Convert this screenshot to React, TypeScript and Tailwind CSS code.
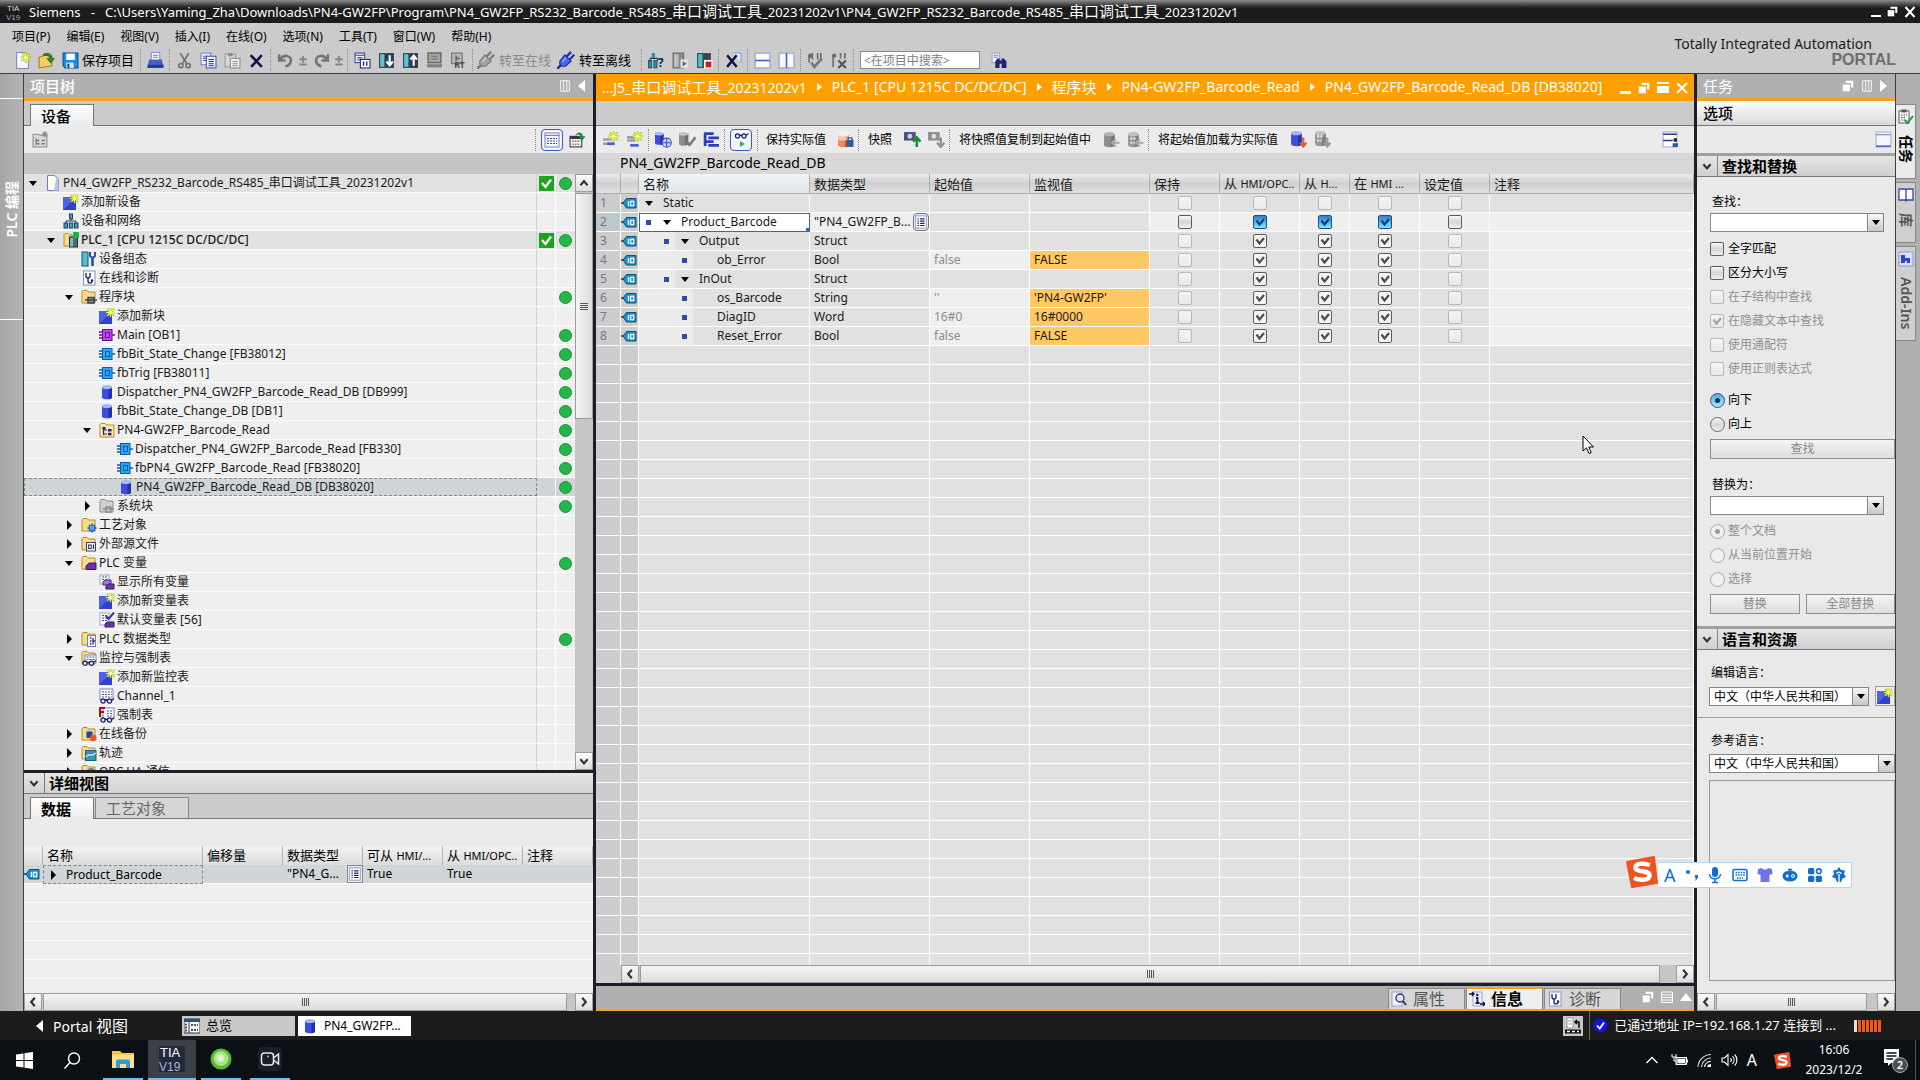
import type { ReactNode } from 'react';
import clsx from 'clsx';

/* ---------- icons ---------- */

const Star = ({ x = 12, y = 4 }: { x?: number; y?: number }) => (
  <g transform={`translate(${x} ${y})`}>
    <path d="M0-4.800V4.800M-4.800 0H4.800M-3.500-3.500L3.500 3.500M3.500-3.500L-3.500 3.500" stroke="#8cab1c" strokeWidth="1.700" />
    <path d="M0-4.200V4.200M-4.200 0H4.200M-3-3L3 3M3-3L-3 3" stroke="#f2ff4a" strokeWidth="1.100" />
    <circle r="1.500" fill="#fdffc0" />
  </g>
);

const Folder = ({ fill = '#f8dc8c', line = '#b58a2c' }: { fill?: string; line?: string }) => (
  <path d="M1 14V2.5L2 1.5H6L7.5 3H14V14Z" fill={fill} stroke={line} strokeWidth="1" />
);

const Doc = () => <path d="M2.5.5H10L13.5 4V15.5H2.5Z" fill="#f6f8ff" stroke="#7c86b8" />;

const Glasses = ({ y = 13 }: { y?: number }) => (
  <g fill="#dfe8ff" stroke="#16205e" strokeWidth="1.2">
    <circle cx="4" cy={y} r="2.1" />
    <circle cx="10.5" cy={y} r="2.1" />
    <path d="M6 12.4H8.5M12.6 12.4L15 10.5" fill="none" />
  </g>
);

const Lines = ({ color = '#4b5696' }: { color?: string }) => (
  <path d="M3 4H13M3 6.5H13M3 9H13M3 11.5H13" stroke={color} strokeDasharray="2 1" />
);

const Plug = ({ a, b }: { a: string; b: string }) => (
  <g stroke={b} strokeWidth="1">
    <path d="M0 16L4 12" strokeWidth="2.2" />
    <path d="M2.5 9L7 3.500L12.500 9L7.500 13.500H4.500L2.500 11.500Z" fill={a} />
    <path d="M8.500 5L12.500 .800M11.200 7.500L15.300 3.300" strokeWidth="2" />
    <path d="M5 9.500L8 6" stroke="#fff" strokeOpacity=".6" />
  </g>
);

const Block = ({ a, b }: { a: string; b: string }) => (
  <g>
    <path d="M0 5H4M0 8H4M0 11H4M12 8H16" stroke={b} strokeWidth="1.7" />
    <rect x="3.5" y="2.500" width="9.5" height="11" fill={a} stroke={b} />
    <rect x="6.5" y="5.5" width="4" height="5" fill="none" stroke={b} />
  </g>
);

const Cylinder = ({ a, b, c }: { a: string; b: string; c: string }) => (
  <g>
    <path d="M3 3V13.2C3 16 13 16 13 13.2V3Z" fill={a} />
    <path d="M9.5 3V15.2C12 14.9 13 14.2 13 13.2V3Z" fill={b} />
    <ellipse cx="8" cy="3" rx="5" ry="2" fill={c} />
  </g>
);

const icons: Record<string, ReactNode> = {
  newDoc: <><Doc /><Star x={11} y={5} /></>,
  open: <><path d="M1 15V5L7 3H13V13Z" fill="#f4cf62" stroke="#a77b1e" /><path d="M5 2C10 0 13 2 13 6H15.5L12 10.5L8.5 6H11C11 4 9 2.5 5 3.5Z" fill="#2c8c35" stroke="#175a1d" strokeWidth=".6" /></>,
  save: <><path d="M1 1H15V15H3L1 13Z" fill="#1b8be0" stroke="#0c4f98" /><rect x="4" y="1.5" width="8" height="6" fill="#fff" /><rect x="4" y="10" width="7" height="5" fill="#dbe9fa" /><rect x="5" y="11" width="2" height="4" fill="#0c4f98" /></>,
  print: <><rect x="4" y="0.5" width="8" height="8" fill="#fff" stroke="#8794c6" /><path d="M5.5 3H10.5M5.5 5H10.5" stroke="#6d7cbb" /><path d="M2 7H14L15.5 14H.5Z" fill="#4560cc" /><rect x=".5" y="12" width="15" height="3" fill="#2338a0" /></>,
  cut: <g fill="none" stroke="#6f6f6f" strokeWidth="1.6"><path d="M4 1L10 11M12 1L6 11" /><circle cx="4.5" cy="12.8" r="2" /><circle cx="11.5" cy="12.8" r="2" /></g>,
  copy: <><rect x="1" y="1" width="9" height="11" fill="#eef1ff" stroke="#7983bf" /><path d="M3 4H8M3 6H8M3 8H8" stroke="#4858ad" /><rect x="6" y="4" width="9" height="11" fill="#f7f8ff" stroke="#4858ad" /><path d="M8 7H13M8 9H13M8 11H13M8 13H13" stroke="#222e86" /></>,
  paste: <><rect x="1" y="2" width="10" height="12" fill="#d5d5d5" stroke="#9a9a9a" /><rect x="4" y="1" width="4" height="3" fill="#8b8b8b" /><rect x="6" y="6" width="9" height="9" fill="#f1f1f1" stroke="#8d8d8d" /><path d="M8 9H13M8 11H13M8 13H13" stroke="#8d8d8d" /></>,
  cross: <path d="M2.5 3L13 14M13 3L3 14" stroke="#11134f" strokeWidth="2.4" />,
  undo: <path d="M2 2V8H8M3 7C7 1 14 4 13 9C12.500 12 10 13 8 13.500" fill="none" stroke="#757575" strokeWidth="2.4" />,
  redo: <path d="M14 2V8H8M13 7C9 1 2 4 3 9C3.500 12 6 13 8 13.500" fill="none" stroke="#757575" strokeWidth="2.4" />,
  plusMinus: <path d="M3 7H13M8 2.500V11.500M3 14H13" stroke="#858585" strokeWidth="2.400" />,
  compile: <><rect x="1" y="1" width="9" height="9" fill="#f0f3ff" stroke="#3e4a90" /><path d="M1 3H10M3 5.500H8M3 7.500H8" stroke="#3e4a90" /><rect x="6" y="7" width="9" height="8" fill="#fff" stroke="#222b6a" /><path d="M9 9V13M12 9V13" stroke="#222b6a" strokeWidth="1.300" /></>,
  download: <><rect x="1" y="1" width="14" height="14" fill="#2d3f58" /><rect x="2" y="2" width="4" height="12" fill="#63c4cb" /><path d="M11 3V11M8 9L11 12.500L14 9" fill="none" stroke="#fff" strokeWidth="2" /></>,
  upload: <><rect x="1" y="1" width="14" height="14" fill="#2d3f58" /><rect x="2" y="2" width="4" height="12" fill="#63c4cb" /><path d="M11 13V5M8 7L11 3.500L14 7" fill="none" stroke="#fff" strokeWidth="2" /></>,
  pcSim: <><rect x="2" y="1" width="12" height="9" fill="#a6a6a6" stroke="#6e6e6e" strokeWidth="1.500" /><path d="M5 4H11M5 6.500H11" stroke="#6e6e6e" /><rect x="1" y="11.500" width="14" height="3" fill="#7f7f7f" /></>,
  rt: <><rect x="1.500" y="1" width="10" height="10" fill="#b5b5b5" stroke="#6e6e6e" /><path d="M5 3L9.500 6L5 9Z" fill="#6e6e6e" /><text x="4" y="15.500" fontSize="8" fontWeight="700" fill="#4a4a4a">RT</text></>,
  plugOff: <Plug a="#a5a5a5" b="#7a7a7a" />,
  plugOn: <Plug a="#4b68e8" b="#1d2f9c" />,
  netHelp: <><path d="M5 2V6M2 8V6H9V8" stroke="#1c3c60" fill="none" /><rect x="3.500" y="1" width="3" height="4" fill="#2a8fa5" /><rect x=".500" y="8" width="3" height="7" fill="#2a8fa5" stroke="#1c3c60" strokeWidth=".700" /><rect x="5.500" y="8" width="3" height="7" fill="#2a8fa5" stroke="#1c3c60" strokeWidth=".700" /><text x="9.500" y="14" fontSize="11" fontWeight="700" fill="#14163f">?</text></>,
  cpuRun: <><rect x="1" y="1" width="10" height="14" fill="#8c8c8c" stroke="#6a6a6a" /><rect x="2" y="2" width="4" height="12" fill="#c0c0c0" /><rect x="8" y="7" width="7" height="8" fill="#e2e2e2" /><path d="M10 8.500L14 11L10 13.500Z" fill="#6a6a6a" /></>,
  cpuStop: <><rect x="1" y="1" width="13" height="14" fill="#3b4658" /><rect x="2" y="2" width="4" height="12" fill="#55bcc6" /><rect x="7.500" y="7.500" width="8" height="8" fill="#fff" /><rect x="9" y="9" width="5.500" height="5.500" fill="#e31818" /></>,
  crossRef: <><path d="M8 1H15V10" fill="#e7ebff" stroke="#8c98ce" /><path d="M2 3L11 14M11 3L2 14" stroke="#11134f" strokeWidth="2.300" /></>,
  splitH: <><rect x="1" y="1" width="14" height="14" fill="#fafbff" stroke="#a4addb" strokeWidth="1.400" /><path d="M1 8H15" stroke="#4a65c8" strokeWidth="1.600" /></>,
  splitV: <><rect x="1" y="1" width="14" height="14" fill="#fafbff" stroke="#a4addb" strokeWidth="1.400" /><path d="M8 1V15" stroke="#4a65c8" strokeWidth="1.600" /></>,
  sessOk: <><path d="M2 4V10M5 1V7M10 1V7M13 1V7" stroke="#696969" strokeWidth="1.500" /><circle cx="3" cy="3.500" r="2" fill="#696969" /><path d="M4 10L7 14L14 6" fill="none" stroke="#777" strokeWidth="2.500" /></>,
  sessNo: <><path d="M2 4V14M9 1V6M13 1V6" stroke="#696969" strokeWidth="1.500" /><circle cx="3" cy="3.500" r="2" fill="#696969" /><path d="M7 8L14 15M14 8L7 15" stroke="#555" strokeWidth="2" /></>,
  find: <><path d="M2 1H9V10H2Z" fill="#f2f4ff" stroke="#9aa3cf" /><path d="M3.500 3H7.500M3.500 5H7.500" stroke="#7781b8" /><path d="M5 15V9L7 6H9V15ZM11 15V6H13L15.500 9V15Z" fill="#1c2570" /><rect x="8" y="8" width="4" height="3" fill="#1c2570" /></>,
  treeNew: <><path d="M1 15V3H6L7 4H14V15Z" fill="#dadada" stroke="#8b8b8b" /><path d="M4 7V13M4 9H7M4 12H7M9 9H12M9 12H12" stroke="#7c7c7c" strokeWidth="1.400" /><path d="M12 0V6M9 3H15M10 1L14 5M14 1L10 5" stroke="#8b8b8b" /></>,
  listView: <><rect x="1" y="1" width="14" height="14" fill="#f5f7ff" stroke="#7480bb" /><path d="M1 3.500H15" stroke="#7480bb" /><path d="M3 6.500H13M3 9H13M3 11.500H13" stroke="#4350a0" strokeDasharray="2 1" /></>,
  gridArrow: <><rect x="1" y="5" width="11" height="10" fill="#fff" stroke="#30314a" /><rect x="1" y="5" width="11" height="2.500" fill="#30314a" /><path d="M3 9.500H11M3 12.500H11" stroke="#b0703c" strokeWidth="1.600" strokeDasharray="1.600 1" /><path d="M6 4C8 0 13 1 13 5H15.500L12 9.500L8.500 5H11C10.500 3 8 3 6 4Z" fill="#23853a" /></>,
  project: <><path d="M2.500.500H9.500L13.500 4V15.500H2.500Z" fill="#fff" stroke="#6f7db6" /><path d="M11 4H13.500V15.500H9Z" fill="#b9c4ee" /></>,
  addNew: <><rect x="0" y="3" width="13" height="13" fill="#3340cf" /><path d="M0 3H13L0 16Z" fill="#4d63e6" /><Star x={11.5} y={4.5} /></>,
  network: <><path d="M8 5V8M3 11V8H13V11" stroke="#1c3c60" fill="none" /><g fill="#39a3b0" stroke="#17415e"><rect x="6.500" y="1" width="3" height="5" /><rect x="1" y="10" width="3.500" height="5" /><rect x="6.300" y="10" width="3.500" height="5" /><rect x="11.500" y="10" width="3.500" height="5" /></g></>,
  plc: <><path d="M1 14V2.500L2 1.500H5L6.500 3H9V14Z" fill="#f8dc8c" stroke="#b58a2c" /><rect x="6.500" y="5" width="8" height="10" fill="#58666f" stroke="#1f2f38" /><rect x="7" y="6" width="3" height="8.500" fill="#5cc5c9" /><rect x="10" y="0" width="6" height="6" fill="#1fb141" /></>,
  config: <><rect x="1" y="1" width="6" height="14" fill="#4fbfc9" stroke="#1f4f70" /><path d="M11.500 6V15" stroke="#27509e" strokeWidth="2.600" /><path d="M9 1V5L11.500 7L14 5V1" fill="none" stroke="#27509e" strokeWidth="2" /></>,
  diag: <><rect x="2.500" y="1" width="11.500" height="14" fill="#fff" stroke="#8591c5" /><path d="M5 3V6C5 8.500 9 8.500 9 6V3M7 8V11C7 13.500 11 13.500 11 11" fill="none" stroke="#1d2870" strokeWidth="1.400" /><circle cx="11" cy="10.500" r="1.300" fill="#1d2870" /></>,
  blocks: <><Folder /><path d="M4 11H16M7 8.500H13V14H7Z" stroke="#3d464c" fill="#8b969c" strokeWidth="1.500" /></>,
  ob: <Block a="#b54be0" b="#6a1296" />,
  fb: <Block a="#2fa4f2" b="#0b5dab" />,
  db: <Cylinder a="#3d4ddb" b="#2430a5" c="#aab4f6" />,
  group: <><path d="M1 15V2.500L2 1.500H6L7.500 3H15V15Z" fill="#fbe7ae" stroke="#b58a2c" /><path d="M4.500 6V13M4.500 8H8M4.500 12H8" stroke="#2a1d80" strokeWidth="1.200" fill="none" /><rect x="3.500" y="5" width="3" height="2.500" fill="#2a1d80" /><rect x="9" y="7" width="3.500" height="2.500" fill="#2a1d80" /><rect x="9" y="10.800" width="3.500" height="2.500" fill="#2a1d80" /></>,
  sysBlocks: <><Folder fill="#cfcfcf" line="#8b8b8b" /><path d="M4 11H15M7 9H12V14H7Z" stroke="#8b8b8b" fill="#d8d8d8" strokeWidth="1.400" /></>,
  tech: <><Folder /><path d="M11 6.500V15.500M6.500 11H15.500M8 8L14 14M14 8L8 14" stroke="#1b62b8" strokeWidth="1.800" /><circle cx="11" cy="11" r="2.400" fill="#5a9ae8" /></>,
  source: <><Folder /><rect x="5.500" y="6.500" width="9" height="8.500" fill="#fff" stroke="#3a4350" /><path d="M12.500 8.500V13" stroke="#1c2470" strokeWidth="1.300" /><rect x="7.600" y="9" width="2.600" height="3.600" fill="none" stroke="#1c2470" /></>,
  tags: <><Folder /><path d="M5 11L8 8H15V14.500H5Z" fill="#6a35ab" stroke="#3c1673" /></>,
  allTags: <><rect x="1" y="1" width="9" height="9" fill="#fff" stroke="#9aa2c8" /><path d="M3 3H8M3 5.500H8" stroke="#38449a" strokeDasharray="2 1" /><path d="M4 8L6 6H12V11H4Z" fill="#9b7ad0" stroke="#4a2786" /><path d="M7 12L9 10H15V15H7Z" fill="#6a35ab" stroke="#3c1673" /></>,
  defTags: <><rect x="1" y="1" width="9" height="12" fill="#fff" stroke="#9aa2c8" /><path d="M3 3.500H8M3 6H8M3 8.500H8" stroke="#38449a" strokeDasharray="2 1" /><path d="M7 4L9.500 7L15 .500" fill="none" stroke="#2736b0" strokeWidth="2" /><path d="M6 12L8 10H15V15H6Z" fill="#6a35ab" stroke="#3c1673" /></>,
  types: <><Folder /><rect x="6.500" y="4.500" width="8" height="11" fill="#fff" stroke="#6d7cbb" /><path d="M9 7H10.500M9 10H10.500M9 13H10.500M12 7V13.500M12 10H14" stroke="#1d2870" strokeWidth="1.300" /></>,
  watch: <><Folder /><rect x="4" y="5" width="11" height="8" fill="#fff" stroke="#7a86bf" /><path d="M5.500 7H13.500M5.500 9.500H13.500" stroke="#4b5696" strokeDasharray="2 1" /><Glasses y={13.2} /></>,
  channel: <><rect x="1" y="1" width="13" height="11" fill="#fff" stroke="#7a86bf" /><Lines /><Glasses /></>,
  force: <><rect x="4" y="1" width="11" height="11" fill="#fff" stroke="#7a86bf" /><path d="M8 4H14M8 6.500H14M8 9H14" stroke="#4b5696" strokeDasharray="2 1" /><path d="M1 10V1H6M1 5H5" fill="none" stroke="#a4102a" strokeWidth="2.200" /><Glasses /></>,
  backup: <><Folder /><ellipse cx="8.500" cy="6" rx="3" ry="1.500" fill="#7d90e0" /><rect x="5.500" y="6" width="6" height="6" fill="#2c3bb0" /><circle cx="12.300" cy="12" r="3.300" fill="#e8562a" /></>,
  trace: <><Folder /><rect x="4.500" y="5.500" width="10.500" height="10" fill="#3d8db5" stroke="#1d5f85" /><path d="M5 12C8 7 10 13 14.500 8" fill="none" stroke="#d7f4ff" strokeWidth="1.300" /></>,
  opc: <><Folder /><circle cx="10" cy="9" r="5" fill="#6c77c4" /></>,
  tag: <><path d="M0 8H3" stroke="#12405f" strokeWidth="1.500" /><path d="M2 8L5.500 3.500H15V13H5.500Z" fill="#1e8fd0" stroke="#0a4f80" /><path d="M7.500 6V11" stroke="#fff" strokeWidth="1.400" /><rect x="9.700" y="6.300" width="3" height="4.400" fill="none" stroke="#fff" strokeWidth="1.200" /></>,
  listBtn: <><rect x="2" y="1" width="12" height="14" fill="#fff" stroke="#8791c2" /><path d="M4 4.500H5.500M4 7H5.500M4 9.500H5.500M4 12H5.500M7 4.500H12M7 7H12M7 9.500H12M7 12H12" stroke="#1d2060" strokeWidth="1.300" /></>,
  rowIns: <><path d="M1 8H9M1 12H7" stroke="#9aa0b4" strokeWidth="2.400" /><path d="M5 12H12" stroke="#4c60cc" strokeWidth="2.600" /><Star x={11} y={5} /></>,
  rowAdd: <><path d="M1 6H8M1 9H9" stroke="#9aa0b4" strokeWidth="2.400" /><path d="M4 13.500H12" stroke="#4c60cc" strokeWidth="2.600" /><Star x={11} y={5} /></>,
  dbNet: <><g transform="translate(-3 0) scale(.85)"><Cylinder a="#3d4ddb" b="#2430a5" c="#aab4f6" /></g><circle cx="11" cy="11" r="4.300" fill="#c8d4ff" stroke="#3a50b5" /><path d="M7 11H15M11 7V15" stroke="#3a50b5" /></>,
  dbCheck: <><g transform="translate(-3 0) scale(.9)"><Cylinder a="#8d8d8d" b="#6f6f6f" c="#c5c5c5" /></g><path d="M7 10L10 13L15.500 6" fill="none" stroke="#7b7b7b" strokeWidth="2.500" /></>,
  expandAll: <path d="M1 2.500H10M5 6.500H15M1 10H10M5 13.500H15M2 2V14" stroke="#2c3fb4" strokeWidth="2.600" />,
  monitor: <><g transform="translate(.5 -9)"><Glasses /></g><path d="M7 9L12 12L7 15Z" fill="#2fb35a" /></>,
  dbLock: <><g transform="translate(-2 0)"><Cylinder a="#f08a4c" b="#c7551c" c="#f7f7f7" /><path d="M3 3V8C5 9.500 11 9.500 13 8V3Z" fill="#f1e4dc" opacity=".7" /></g><rect x="9" y="8.500" width="6.500" height="6.500" fill="#2f5c9c" /><path d="M10.500 8.500V6.500H14V8.500" fill="none" stroke="#2f5c9c" strokeWidth="1.300" /></>,
  snapUp: <><rect x="0" y="1" width="11" height="8" fill="#4a5478" /><circle cx="5.500" cy="5" r="2.300" fill="#c9d2f5" /><path d="M12 15V8M8.500 10L12 6L15.500 10" stroke="#1d8b36" strokeWidth="2.400" fill="none" /></>,
  snapDown: <><rect x="0" y="1" width="11" height="8" fill="#8f8f8f" /><circle cx="5.500" cy="5" r="2.300" fill="#ddd" /><path d="M12 6V13M8.500 11L12 15L15.500 11" stroke="#8f8f8f" strokeWidth="2.200" fill="none" /></>,
  dbLeft: <><g transform="translate(-2 0)"><Cylinder a="#8d8d8d" b="#747474" c="#b5b5b5" /></g><path d="M15.500 11H9M12 7.500L8.500 11L12 14.500" stroke="#a8a8a8" strokeWidth="2" fill="none" /></>,
  dbLeft2: <><g transform="translate(-2 0)"><Cylinder a="#969696" b="#7d7d7d" c="#c0c0c0" /></g><path d="M3 7H8M3 11H7" stroke="#eee" strokeWidth="2" strokeDasharray="2 1" /><path d="M15.500 11H9M12 7.500L8.500 11L12 14.500" stroke="#a8a8a8" strokeWidth="2" fill="none" /></>,
  dbDown: <><g transform="translate(-2 -1)"><Cylinder a="#3d4ddb" b="#2430a5" c="#aab4f6" /></g><path d="M12.500 6V13M9.500 11L12.500 14.500L15.500 11" stroke="#e8562a" strokeWidth="2" fill="none" /></>,
  dbDown2: <><g transform="translate(-2 -1)"><Cylinder a="#969696" b="#7d7d7d" c="#c0c0c0" /></g><path d="M3 5H8M3 9H7" stroke="#eee" strokeWidth="2" strokeDasharray="2 1" /><path d="M12.500 6V13M9.500 11L12.500 14.500L15.500 11" stroke="#999" strokeWidth="2" fill="none" /></>,
  layout: <><rect x="1" y="1" width="13" height="14" fill="#fff" stroke="#a4addb" /><path d="M1 3H14M1 9H10" stroke="#2c3f84" strokeWidth="1.300" /><circle cx="12.500" cy="8.500" r="1.800" fill="#223" /><path d="M10 15V11.500H15V15Z" fill="#2b5aa8" /></>,
  window: <><rect x="1" y="1" width="14" height="13" fill="#f4f6ff" stroke="#a4addb" /><path d="M1 3.500H15" stroke="#7480bb" /><path d="M1 14.500H15" stroke="#4a65c8" strokeWidth="1.500" /></>,
  taskTab: <><rect x="1" y="2" width="10" height="12" fill="#fff" stroke="#4e5a66" /><rect x="3.500" y=".500" width="5" height="3" fill="#4e5a66" /><path d="M3 6H9M3 8.500H8M3 11H7" stroke="#333c6a" strokeDasharray="1.500 1" /><path d="M7 11L9.500 14L15 7" fill="none" stroke="#259446" strokeWidth="2" /></>,
  book: <path d="M1 2H7L8 3L9 2H15V13H9L8 14L7 13H1ZM8 3V14" fill="#fff" stroke="#3446b5" strokeWidth="1.300" />,
  addin: <><rect x="1" y="1" width="14" height="14" fill="#d6e0ff" stroke="#8b9ad8" /><path d="M3 4H7V7H12V12H9V10H7V12H3Z" fill="#2c45c4" /></>,
  props: <><rect x="1" y="1" width="10" height="14" fill="#eef1ff" stroke="#98a1cd" /><circle cx="9" cy="7" r="4" fill="#dfe7ff" stroke="#333d55" strokeWidth="1.400" /><path d="M12 10L15 14" stroke="#333d55" strokeWidth="2" /></>,
  info: <><rect x="4" y="1" width="9" height="14" fill="#eef1ff" stroke="#98a1cd" /><path d="M0 3H5M3 1L5 3L3 5M11 13H16M14 11L16 13L14 15" stroke="#14163f" strokeWidth="1.300" fill="none" /><path d="M7 7H8.500V12M6.500 12H10.500" stroke="#14163f" strokeWidth="1.800" fill="none" /><circle cx="8.200" cy="4" r="1.200" fill="#14163f" /></>,
  overview: <><rect x="0" y="1" width="16" height="14" fill="#fff" stroke="#1c2c50" /><rect x="0" y="1" width="16" height="3" fill="#2b4b86" /><path d="M5 4V15" stroke="#1c2c50" /><path d="M1 6.500H4M1 9.500H4M1 12.500H4M7 7H14M7 12H14" stroke="#4a4f60" strokeWidth="2" strokeDasharray="2 1" /></>,
  restore: <><path d="M5 1H15V10H12V4H5Z" fill="#fff" /><rect x="1" y="6" width="9.500" height="9" fill="#fff" /></>,
  pinGrid: <path d="M3 2V14M6.500 2V14M10 2V14M13 2V14M3 2H13M3 14H13" stroke="#fff" fill="none" />,
};

const Icon = ({ name, size = 16 }: { name: string; size?: number }) => (
  <svg width={size} height={size} viewBox="0 0 16 16" className="block shrink-0" fill="none" aria-hidden="true">
    {icons[name]}
  </svg>
);

const Sogou = ({ size }: { size: number }) => (
  <svg width={size} height={size} viewBox="0 0 32 32" className="block shrink-0">
    <path d="M1 6L28 1L31 27L6 31Z" fill="#ee5422" stroke="#ee5422" strokeWidth="2" strokeLinejoin="round" />
    <path d="M24 9C17 6.500 9 7.500 9.500 12C10 16.500 23 14 23.500 19C24 24.500 14 25 8 22" fill="none" stroke="#fff" strokeWidth="4.500" />
  </svg>
);

/* ---------- small shared parts ---------- */

const ToolBtn = ({ icon, label, narrow }: { icon: string; label: string; narrow?: boolean }) => (
  <button aria-label={label} className={clsx('flex h-6 shrink-0 items-center justify-center', narrow ? 'w-3' : 'w-6')}>
    <Icon name={icon} size={narrow ? 12 : 17} />
  </button>
);

const Sep = ({ wide }: { wide?: boolean }) => (
  <span className={clsx('h-[22px] w-0 shrink-0 border-l border-dotted border-[#8c8c8c]', wide ? 'mx-0.5' : 'mx-px')} />
);

const Caret = ({ open }: { open: boolean }) => (
  <svg width="10" height="10" viewBox="0 0 10 10" className="block shrink-0">
    <path d={open ? 'M1 3H9L5 8Z' : 'M3 0L8 5L3 10Z'} fill="#000" />
  </svg>
);

const Chevron = ({ dir }: { dir: 'up' | 'down' | 'left' | 'right' }) => {
  const d = { up: 'M2 7L5 3.500L8 7', down: 'M2 3.500L5 7L8 3.500', left: 'M6.500 1.500L3.500 5L6.500 8.500', right: 'M3.500 1.500L6.500 5L3.500 8.500' }[dir];
  return (
    <svg width="12" height="12" viewBox="0 0 10 10" className="block"><path d={d} fill="none" stroke="#333" strokeWidth="1.800" /></svg>
  );
};

const scrollBtn = 'flex size-[18px] shrink-0 items-center justify-center border border-[#9c9c9c] bg-linear-to-b from-[#fafafa] to-[#dedede]';

const HScroll = ({ tail }: { tail: string }) => (
  <div className="flex h-[18px] shrink-0 bg-[#c6c6c6]">
    <button aria-label="向左滚动" className={scrollBtn}><Chevron dir="left" /></button>
    <div className="ml-px flex flex-1 items-center justify-center gap-px border border-[#9c9c9c] bg-linear-to-b from-[#f4f4f4] to-[#dcdcdc]">
      {[0, 1, 2, 3].map((i) => <i key={i} className="h-2 w-px bg-[#555]" />)}
    </div>
    <span className={tail} />
    <button aria-label="向右滚动" className={scrollBtn}><Chevron dir="right" /></button>
  </div>
);

const Check = ({ id, checked, disabled, blue, label }: { id?: string; checked?: boolean; disabled?: boolean; blue?: boolean; label?: string }) => (
  <span className="inline-grid size-[14px] shrink-0 align-top">
    <input
      id={id}
      type="checkbox"
      defaultChecked={checked}
      disabled={disabled}
      aria-label={label}
      className={clsx(
        'm-0 size-[14px] appearance-none rounded-[2px] border [grid-area:1/1]',
        blue ? 'border-[#1d4f7c] bg-linear-to-b from-[#2f7fd0] to-[#7eeaf0]'
          : disabled ? 'border-[#b8b8b8] bg-linear-to-b from-[#f4f4f4] to-[#e9e9e9]'
          : checked ? 'border-[#5c5c5c] bg-[#f4f4f4]'
          : 'border-[#5c5c5c] bg-linear-to-b from-[#fafafa] via-[#d4d4d4] to-[#f2f2f2]',
      )}
    />
    {checked && (
      <svg viewBox="0 0 14 14" className="pointer-events-none size-[14px] [grid-area:1/1]">
        <path d="M3.500 5.500L6.500 9.500L11 4" fill="none" stroke={blue ? '#123f80' : disabled ? '#a5a5a5' : '#4c4c4c'} strokeWidth="2.200" />
      </svg>
    )}
  </span>
);

const Radio = ({ id, name, label, checked, disabled }: { id: string; name: string; label: string; checked?: boolean; disabled?: boolean }) => (
  <label htmlFor={id} className={clsx('flex h-6 items-center gap-[3px]', disabled && 'text-[#909090]')}>
    <span className="grid size-[15px] place-items-center">
      <input
        id={id}
        type="radio"
        name={name}
        defaultChecked={checked}
        disabled={disabled}
        className={clsx(
          'm-0 size-[15px] appearance-none rounded-full border [grid-area:1/1]',
          disabled ? 'border-[#a6a6a6] bg-[#f0f0f0]'
            : checked ? 'border-[#31597a] bg-linear-to-b from-[#5aa9dd] to-[#a5eafa]'
            : 'border-[#666] bg-linear-to-b from-[#fafafa] via-[#d6d6d6] to-[#f2f2f2]',
        )}
      />
      {checked && <i className={clsx('pointer-events-none size-[5px] rounded-full [grid-area:1/1]', disabled ? 'bg-[#9a9a9a]' : 'bg-[#0b2f66]')} />}
    </span>
    {label}
  </label>
);

const Combo = ({ id, value, className }: { id: string; value: string; className?: string }) => (
  <div className={clsx('grid h-[19px] border border-[#858585] bg-white', className)}>
    <select id={id} className="w-full appearance-none bg-transparent pl-1 text-xs/[17px] [grid-area:1/1]">
      <option>{value}</option>
    </select>
    <span className="pointer-events-none flex h-[17px] w-4 items-center justify-center justify-self-end border-l border-[#858585] bg-linear-to-b from-[#f8f8f8] to-[#c8c8c8] [grid-area:1/1]">
      <svg width="8" height="5" viewBox="0 0 8 5"><path d="M0 0H8L4 5Z" fill="#000" /></svg>
    </span>
  </div>
);

/* ---------- data ---------- */

type Node = { t: string; lv: number; icon: string; open?: boolean; ok?: boolean; dot?: boolean; head?: boolean; sel?: boolean };

const tree: Node[] = [
  { t: 'PN4_GW2FP_RS232_Barcode_RS485_串口调试工具_20231202v1', lv: 0, icon: 'project', open: true, ok: true, dot: true, head: true },
  { t: '添加新设备', lv: 1, icon: 'addNew' },
  { t: '设备和网络', lv: 1, icon: 'network' },
  { t: 'PLC_1 [CPU 1215C DC/DC/DC]', lv: 1, icon: 'plc', open: true, ok: true, dot: true, head: true },
  { t: '设备组态', lv: 2, icon: 'config' },
  { t: '在线和诊断', lv: 2, icon: 'diag' },
  { t: '程序块', lv: 2, icon: 'blocks', open: true, dot: true },
  { t: '添加新块', lv: 3, icon: 'addNew' },
  { t: 'Main [OB1]', lv: 3, icon: 'ob', dot: true },
  { t: 'fbBit_State_Change [FB38012]', lv: 3, icon: 'fb', dot: true },
  { t: 'fbTrig [FB38011]', lv: 3, icon: 'fb', dot: true },
  { t: 'Dispatcher_PN4_GW2FP_Barcode_Read_DB [DB999]', lv: 3, icon: 'db', dot: true },
  { t: 'fbBit_State_Change_DB [DB1]', lv: 3, icon: 'db', dot: true },
  { t: 'PN4-GW2FP_Barcode_Read', lv: 3, icon: 'group', open: true, dot: true },
  { t: 'Dispatcher_PN4_GW2FP_Barcode_Read [FB330]', lv: 4, icon: 'fb', dot: true },
  { t: 'fbPN4_GW2FP_Barcode_Read [FB38020]', lv: 4, icon: 'fb', dot: true },
  { t: 'PN4_GW2FP_Barcode_Read_DB [DB38020]', lv: 4, icon: 'db', dot: true, sel: true },
  { t: '系统块', lv: 3, icon: 'sysBlocks', open: false, dot: true },
  { t: '工艺对象', lv: 2, icon: 'tech', open: false },
  { t: '外部源文件', lv: 2, icon: 'source', open: false },
  { t: 'PLC 变量', lv: 2, icon: 'tags', open: true, dot: true },
  { t: '显示所有变量', lv: 3, icon: 'allTags' },
  { t: '添加新变量表', lv: 3, icon: 'addNew' },
  { t: '默认变量表 [56]', lv: 3, icon: 'defTags' },
  { t: 'PLC 数据类型', lv: 2, icon: 'types', open: false, dot: true },
  { t: '监控与强制表', lv: 2, icon: 'watch', open: true },
  { t: '添加新监控表', lv: 3, icon: 'addNew' },
  { t: 'Channel_1', lv: 3, icon: 'channel' },
  { t: '强制表', lv: 3, icon: 'force' },
  { t: '在线备份', lv: 2, icon: 'backup', open: false },
  { t: '轨迹', lv: 2, icon: 'trace', open: false },
  { t: 'OPC UA 通信', lv: 2, icon: 'opc', open: false },
];

const indent = ['pl-1', 'pl-[22px]', 'pl-10', 'pl-[58px]', 'pl-[76px]'];

type Row = { name: string; lv: number; open?: boolean; type: string; start?: string; live?: string };

const rows: Row[] = [
  { name: 'Static', lv: 0, open: true, type: '' },
  { name: 'Product_Barcode', lv: 1, open: true, type: '"PN4_GW2FP_B...' },
  { name: 'Output', lv: 2, open: true, type: 'Struct' },
  { name: 'ob_Error', lv: 3, type: 'Bool', start: 'false', live: 'FALSE' },
  { name: 'InOut', lv: 2, open: true, type: 'Struct' },
  { name: 'os_Barcode', lv: 3, type: 'String', start: "''", live: "'PN4-GW2FP'" },
  { name: 'DiagID', lv: 3, type: 'Word', start: '16#0', live: '16#0000' },
  { name: 'Reset_Error', lv: 3, type: 'Bool', start: 'false', live: 'FALSE' },
];

const bulletIndent = ['', '', 'pl-[18px]', 'pl-9'];
const columns = ['名称', '数据类型', '起始值', '监视值', '保持', '从 HMI/OPC..', '从 H...', '在 HMI ...', '设定值', '注释'];
const menus = ['项目(P)', '编辑(E)', '视图(V)', '插入(I)', '在线(O)', '选项(N)', '工具(T)', '窗口(W)', '帮助(H)'];

/* ---------- regions ---------- */

const PATH = 'PN4_GW2FP_RS232_Barcode_RS485_';

const TitleBar = () => (
  <header className="flex h-[23px] shrink-0 items-center bg-linear-to-b from-[#8c8c8c] via-[#1c1c1c] via-35% to-[#1c1c1c] pl-1.5 pr-1 text-[13px]/[22px] text-white">
    <svg width="17" height="20" viewBox="0 0 17 20" className="shrink-0 font-['Liberation_Sans']">
      <text x="1" y="9" fontSize="8" fill="#dcdcdc">TIA</text>
      <text x="0" y="18" fontSize="8" fill="#9aa5c4">V19</text>
    </svg>
    <h1 className="ml-1.5 flex-1 whitespace-pre">
      {'Siemens   -   C:\\Users\\Yaming_Zha\\Downloads\\PN4-GW2FP\\Program\\' + PATH}
      <span className="text-[15px]">串口调试工具</span>{'_20231202v1\\' + PATH}
      <span className="text-[15px]">串口调试工具</span>_20231202v1
    </h1>
    <div className="flex items-center gap-1.5">
      <button aria-label="最小化" className="h-2.5 w-2.5 border-b-2 border-white" />
      <button aria-label="还原"><Icon name="restore" size={11} /></button>
      <button aria-label="关闭">
        <svg width="12" height="12" viewBox="0 0 12 12"><path d="M1.500 1L10.500 11M10.500 1L1.500 11" stroke="#fff" strokeWidth="2" /></svg>
      </button>
    </div>
  </header>
);

const MainToolbar = () => (
  <div className="flex h-[51px] shrink-0 justify-between border-b border-[#3c3c3c] bg-[#cbcbcb]">
    <div>
      <nav className="flex h-6 items-center gap-4 pl-3 pt-1 text-xs/5">
        {menus.map((m) => <button key={m} className="shrink-0">{m}</button>)}
      </nav>
      <div className="flex h-[26px] items-center pl-2.5 text-[13px]/6">
        <ToolBtn icon="newDoc" label="新建" />
        <ToolBtn icon="open" label="打开" />
        <ToolBtn icon="save" label="保存" />
        <button className="mr-0.5 w-[54px] text-left">保存项目</button>
        <Sep wide /><ToolBtn icon="print" label="打印" /><Sep wide />
        <ToolBtn icon="cut" label="剪切" />
        <ToolBtn icon="copy" label="复制" />
        <ToolBtn icon="paste" label="粘贴" />
        <ToolBtn icon="cross" label="删除" />
        <Sep wide />
        <ToolBtn icon="undo" label="撤销" /><ToolBtn icon="plusMinus" label="撤销列表" narrow />
        <ToolBtn icon="redo" label="重做" /><ToolBtn icon="plusMinus" label="重做列表" narrow />
        <Sep wide />
        <ToolBtn icon="compile" label="编译" />
        <ToolBtn icon="download" label="下载" />
        <ToolBtn icon="upload" label="上传" />
        <ToolBtn icon="pcSim" label="仿真" />
        <ToolBtn icon="rt" label="运行系统" />
        <Sep wide />
        <button disabled className="flex w-20 items-center gap-1 pl-0.5 text-[#8b8b8b]"><Icon name="plugOff" size={18} />转至在线</button>
        <button className="flex w-[84px] items-center gap-1 pl-0.5"><Icon name="plugOn" size={18} />转至离线</button>
        <Sep wide />
        <ToolBtn icon="netHelp" label="可访问的设备" />
        <ToolBtn icon="cpuRun" label="启动" />
        <ToolBtn icon="cpuStop" label="停止" />
        <Sep wide /><ToolBtn icon="crossRef" label="交叉引用" /><Sep wide />
        <ToolBtn icon="splitH" label="水平拆分" />
        <ToolBtn icon="splitV" label="垂直拆分" />
        <Sep wide />
        <ToolBtn icon="sessOk" label="提交" />
        <ToolBtn icon="sessNo" label="放弃" />
        <Sep wide />
        <input aria-label="在项目中搜索" placeholder="<在项目中搜索>" className="ml-1 mr-1.5 h-[18px] w-[120px] border border-[#8a8a8a] bg-white px-[3px] text-xs placeholder:text-[#808080]" />
        <ToolBtn icon="find" label="搜索" />
      </div>
    </div>
    <div className="mr-6 mt-3 flex flex-col text-[#1c1c1c]">
      <span className="mr-6 text-sm/[18px]">Totally Integrated Automation</span>
      <span className="self-end font-['Liberation_Sans'] text-base/[14px] font-bold text-[#6e6e6e]">PORTAL</span>
    </div>
  </div>
);

const StatusDot = () => <i className="size-[13px] rounded-full border border-[#1a9438] bg-[#25b54a]" />;

const ProjectTree = () => (
  <section className="flex min-h-0 flex-1 flex-col">
    <div className="flex h-[27px] shrink-0 items-center justify-between border-b-[3px] border-[#f5a31c] bg-[#b0b0b0] pl-1.5 pr-2">
      <h2 className="text-[15px] font-medium text-white">项目树</h2>
      <div className="flex items-center gap-1.5">
        <button aria-label="固定"><Icon name="pinGrid" size={14} /></button>
        <button aria-label="折叠"><svg width="7" height="12" viewBox="0 0 7 12"><path d="M7 0V12L0 6Z" fill="#fff" /></svg></button>
      </div>
    </div>
    <div className="flex h-[25px] shrink-0 items-end border-b border-[#777] bg-[#cbcbcb] pl-1.5">
      <button className="-mb-px h-[22px] w-16 border border-b-0 border-[#777] bg-linear-to-b from-white to-[#ebebeb] pr-3 text-[15px]/5 font-medium">设备</button>
    </div>
    <div className="flex h-[27px] shrink-0 items-center justify-between bg-[#ebebeb] pl-1 pr-1">
      <ToolBtn icon="treeNew" label="新建组" />
      <div className="flex items-center gap-0.5">
        <Sep />
        <button aria-label="列表视图" className="ml-0.5 flex size-[22px] items-center justify-center rounded-sm border border-[#3c5cb4] bg-[#f4f6ff]"><Icon name="listView" /></button>
        <ToolBtn icon="gridArrow" label="导出" />
      </div>
    </div>
    <div className="h-[21px] shrink-0 bg-[#c4c4c4]" />
    <div className="flex min-h-0 flex-1 bg-[#efefef]">
      <ul className="min-w-0 flex-1 overflow-hidden text-xs/[18px] text-[#1a1a1a]">
        {tree.map((n) => (
          <li key={n.t} className={clsx('flex h-[19px] border-b border-white', n.sel ? 'bg-[#d0d6d8]' : n.head && 'bg-[#e1e1e1]')}>
            <div className={clsx('flex min-w-0 flex-1 items-center border-r', indent[n.lv], n.sel ? 'border border-dashed border-[#888]' : 'border-[#cfcfcf]')}>
              <span className="w-[17px] shrink-0">{n.open !== undefined && <Caret open={n.open} />}</span>
              <Icon name={n.icon} />
              <span className={clsx('ml-0.5 truncate', n.lv === 1 && n.head && 'font-medium')}>{n.t}</span>
            </div>
            <span className="flex w-[18px] items-center justify-center">
              {n.ok && (
                <svg width="15" height="15" viewBox="0 0 15 15"><rect width="15" height="15" fill="#1aa51f" /><path d="M3 7L6.500 11L12 3.500" fill="none" stroke="#fff" strokeWidth="2.200" /></svg>
              )}
            </span>
            <span className="flex w-5 items-center border-l border-white pl-[3px]">{n.dot && <StatusDot />}</span>
          </li>
        ))}
      </ul>
      <div className="flex w-[18px] shrink-0 flex-col bg-[#c6c6c6]">
        <button aria-label="向上滚动" className={scrollBtn}><Chevron dir="up" /></button>
        <div className="mt-px flex h-[226px] flex-col items-center justify-center gap-px border border-[#9c9c9c] bg-linear-to-r from-[#f4f4f4] to-[#dcdcdc]">
          {[0, 1, 2, 3].map((i) => <i key={i} className="h-px w-2 bg-[#555]" />)}
        </div>
        <button aria-label="向下滚动" className={clsx(scrollBtn, 'mt-auto')}><Chevron dir="down" /></button>
      </div>
    </div>
  </section>
);

const DetailView = () => {
  const th = 'h-[19px] truncate border-r border-[#b4b4b4] bg-linear-to-b from-[#f2f2f2] to-[#dcdcdc] pl-1 text-left text-[13px]/[18px] font-normal';
  const td = 'h-[19px] truncate border-b border-white pl-1';
  return (
    <section className="flex h-[241px] shrink-0 flex-col border-t-[3px] border-[#1c1f2a] bg-[#efefef]">
      <div className="flex h-[21px] shrink-0 border-b border-[#777] bg-linear-to-b from-[#e6e6e6] to-[#d2d2d2]">
        <button aria-label="折叠详细视图" className="flex w-[21px] items-center justify-center border-r border-[#777]"><Chevron dir="down" /></button>
        <h2 className="pl-1 text-[15px]/5 font-semibold">详细视图</h2>
      </div>
      <div className="flex h-[25px] shrink-0 items-end gap-px border-b border-[#777] bg-[#cbcbcb] pl-1.5">
        <button className="-mb-px h-[22px] w-16 border border-b-0 border-[#777] bg-linear-to-b from-white to-[#ebebeb] pr-3 text-[15px]/5 font-semibold">数据</button>
        <button className="h-[21px] w-[94px] border border-b-0 border-[#888] bg-[#d6d6d6] pr-3 text-[15px]/5 text-[#666]">工艺对象</button>
      </div>
      <div className="h-[27px] shrink-0 bg-[#ebebeb]" />
      <div className="min-h-0 flex-1 overflow-hidden">
        <table className="w-full table-fixed border-separate border-spacing-0 text-xs/[18px]">
          <colgroup>
            <col className="w-[19px]" /><col className="w-40" /><col className="w-20" /><col className="w-20" /><col className="w-20" /><col className="w-20" /><col />
          </colgroup>
          <thead>
            <tr>
              <th className={th} />
              {['名称', '偏移量', '数据类型', '可从 HMI/...', '从 HMI/OPC..', '注释'].map((h) => (
                <th key={h} className={th}>{h.split(' ')[0]} <span className="text-[11px]">{h.split(' ')[1]}</span></th>
              ))}
            </tr>
          </thead>
          <tbody>
            <tr className="bg-[#d0d6d8]">
              <td className="h-[19px] border-b border-white"><Icon name="tag" /></td>
              <td className="h-[19px] border border-dashed border-[#888] pl-1">
                <span className="flex h-[17px] items-center gap-2"><Caret open={false} />Product_Barcode</span>
              </td>
              <td className={td} />
              <td className="h-[19px] border-b border-white pl-1">
                <span className="flex h-[18px] items-center justify-between">"PN4_G...
                  <button aria-label="选择类型" className="flex h-[18px] w-4 items-center justify-center border border-[#8a8a8a] bg-[#e8e8ee]"><Icon name="listBtn" size={14} /></button>
                </span>
              </td>
              <td className={td}>True</td>
              <td className={td}>True</td>
              <td className={td} />
            </tr>
            {Array.from({ length: 6 }, (_, i) => <tr key={i}><td colSpan={7} className={td} /></tr>)}
          </tbody>
        </table>
      </div>
      <HScroll tail="w-2" />
    </section>
  );
};

const crumbs: ReactNode[] = [
  <>...J5_<span className="text-[15px]">串口调试工具</span>_20231202v1</>,
  'PLC_1 [CPU 1215C DC/DC/DC]',
  <span className="text-[15px]">程序块</span>,
  'PN4-GW2FP_Barcode_Read',
  'PN4_GW2FP_Barcode_Read_DB [DB38020]',
];

const Editor = () => {
  const line = 'h-[19px] border-b border-r border-white p-0';
  return (
    <main className="flex min-w-0 flex-1 flex-col bg-[#e1e1e1]">
      <div className="flex h-[27px] shrink-0 items-center justify-between bg-[#ff9f00] pl-1.5 pr-1.5 text-sm text-white">
        <ol className="flex min-w-0 items-center whitespace-nowrap">
          {crumbs.map((c, i) => (
            <li key={i} className="flex items-center">
              {i > 0 && <svg width="5" height="8" viewBox="0 0 5 8" className="mx-2.5"><path d="M0 0L5 4L0 8Z" fill="#fff" /></svg>}
              <a href="#" className="block">{c}</a>
            </li>
          ))}
        </ol>
        <div className="flex items-center gap-[7px]">
          <button aria-label="最小化" className="h-3 w-[11px] border-b-[3px] border-white" />
          <button aria-label="浮动"><Icon name="restore" size={12} /></button>
          <button aria-label="最大化" className="h-[11px] w-3 border-b-[7px] border-t-2 border-white" />
          <button aria-label="关闭"><svg width="12" height="12" viewBox="0 0 12 12"><path d="M1 1L11 11M11 1L1 11" stroke="#fff" strokeWidth="2" /></svg></button>
        </div>
      </div>
      <div className="h-[25px] shrink-0 border-b border-[#777] bg-[#cbcbcb]" />
      <div className="flex h-[27px] shrink-0 items-center bg-[#ebebeb] pl-0.5 pr-3 text-xs/6">
        <ToolBtn icon="rowIns" label="插入行" />
        <ToolBtn icon="rowAdd" label="添加行" />
        <Sep wide />
        <ToolBtn icon="dbNet" label="复位起始值" />
        <ToolBtn icon="dbCheck" label="更新接口" />
        <ToolBtn icon="expandAll" label="全部展开" />
        <Sep />
        <button aria-label="全部监视" className="mx-1 flex size-[22px] items-center justify-center rounded-sm border border-[#3c5cb4] bg-[#f4f6ff]"><Icon name="monitor" /></button>
        <Sep />
        <button className="mx-[7px]">保持实际值</button>
        <ToolBtn icon="dbLock" label="锁定" />
        <Sep />
        <button className="mx-2">快照</button>
        <ToolBtn icon="snapUp" label="加载快照" />
        <ToolBtn icon="snapDown" label="保存快照" />
        <Sep />
        <button className="mx-2">将快照值复制到起始值中</button>
        <ToolBtn icon="dbLeft" label="复制全部" />
        <ToolBtn icon="dbLeft2" label="复制设定值" />
        <Sep />
        <button className="mx-2">将起始值加载为实际值</button>
        <ToolBtn icon="dbDown" label="加载全部" />
        <ToolBtn icon="dbDown2" label="加载设定值" />
        <span className="flex-1" />
        <ToolBtn icon="layout" label="布局" />
      </div>
      <h2 className="h-[21px] shrink-0 bg-[#d8d8d8] pl-6 text-sm/5">PN4_GW2FP_Barcode_Read_DB</h2>
      <div className="min-h-0 flex-1 overflow-hidden">
        <table className="w-full table-fixed border-separate border-spacing-0 text-xs/[18px] text-[#1a1a1a]">
          <colgroup>
            <col className="w-[25px]" /><col className="w-[18px]" /><col className="w-[171px]" /><col className="w-[120px]" /><col className="w-[100px]" /><col className="w-[120px]" />
            <col className="w-[70px]" /><col className="w-20" /><col className="w-[50px]" /><col className="w-[70px]" /><col className="w-[70px]" /><col />
          </colgroup>
          <thead>
            <tr className="text-left text-[13px]/[18px]">
              {['', '', ...columns].map((c, i) => (
                <th key={i} className={clsx('h-[19px] overflow-hidden whitespace-nowrap border-b border-r border-[#b0b0b0] bg-linear-to-b py-0 pl-1 font-normal', i === 2 ? 'from-[#f2f5f7] to-[#dfe5e9]' : 'from-[#ededed] via-[#cfcfcf] to-[#e0e0e0]')}>
                  {c.includes(' ') ? <>{c[0]} <span className="text-[11px]">{c.slice(2)}</span></> : c}
                </th>
              ))}
            </tr>
          </thead>
          <tbody>
            {rows.map((r, i) => {
              const sel = i === 1;
              return (
                <tr key={r.name}>
                  <td className={clsx(line, 'pl-1 text-[#777]', sel ? 'bg-[#bcc8ce]' : 'bg-[#cdcdcd]')}>{i + 1}</td>
                  <td className={clsx(line, 'bg-[#cdcdcd]')}><Icon name="tag" /></td>
                  <td className={clsx(line, sel && 'relative bg-white outline outline-[#3b66ae] -outline-offset-1')}>
                    <span className={clsx('flex h-[18px] items-center', !sel && r.lv > 0 && 'bg-[#ebebeb]', bulletIndent[r.lv])}>
                      {r.lv > 0 && (
                        <span className="flex w-[18px] justify-center"><i className="size-[5px] bg-[#3348a8]" /></span>
                      )}
                      <span className={clsx('flex h-[18px] flex-1 items-center', !sel && 'bg-[#e1e1e1]')}>
                        <span className="w-6 pl-[5px]">{r.open && <Caret open />}</span>
                        {r.name}
                      </span>
                    </span>
                    {sel && <i className="absolute -bottom-px -right-px size-1 bg-[#3b66ae]" />}
                  </td>
                  <td className={clsx(line, 'pl-1', sel && 'bg-[#efefef]')}>
                    {sel ? (
                      <span className="flex h-[18px] items-center justify-between">{r.type}
                        <button aria-label="选择数据类型" className="flex h-[18px] w-4 items-center justify-center rounded-sm border border-[#777] bg-[#e8e8ee]"><Icon name="listBtn" size={14} /></button>
                      </span>
                    ) : r.type}
                  </td>
                  <td className={clsx(line, 'pl-1 text-[#8c8c8c]', r.start && 'bg-[#efefef]')}>{r.start}</td>
                  <td className={clsx(line, 'pl-1', r.live && 'bg-[#ffc864]')}>{r.live}</td>
                  {columns.slice(4, 9).map((c, k) => {
                    const edge = k === 0 || k === 4;
                    return (
                      <td key={c} className={clsx(line, 'text-center leading-none', sel && 'bg-[#efefef]')}>
                        <Check label={`${r.name} ${c}`} checked={!edge && i > 0} blue={sel && !edge} disabled={i === 0 || (edge && !sel)} />
                      </td>
                    );
                  })}
                  <td className={clsx(line, i > 0 && 'bg-[#efefef]')} />
                </tr>
              );
            })}
            {Array.from({ length: 33 }, (_, i) => (
              <tr key={i}>
                {Array.from({ length: 12 }, (_, k) => <td key={k} className={clsx(line, k < 2 && 'bg-[#cdcdcd]')} />)}
              </tr>
            ))}
          </tbody>
        </table>
      </div>
      <div className="flex bg-[#cdcdcd]">
        <span className="w-[25px] shrink-0" />
        <div className="flex-1"><HScroll tail="w-4" /></div>
      </div>
      <div className="flex h-7 shrink-0 items-end justify-end gap-px border-b-2 border-t-[3px] border-b-[#f5a31c] border-t-[#1c1f2a] bg-[#b0b0b0] text-base/5 text-[#555]">
        <button className="flex h-[21px] w-[77px] items-center gap-1.5 border border-b-0 border-[#888] bg-[#d6d6d6] pl-0.5"><Icon name="props" />属性</button>
        <button className="flex h-[22px] w-[77px] items-center gap-1.5 border border-b-0 border-t-2 border-[#888] border-t-[#f5a31c] bg-[#efefef] pl-0.5 font-semibold text-black"><Icon name="info" />信息</button>
        <button className="flex h-[21px] w-[77px] items-center gap-1.5 border border-b-0 border-[#888] bg-[#d6d6d6] pl-0.5"><Icon name="diag" />诊断</button>
        <div className="mb-1.5 ml-5 mr-0.5 flex items-center gap-[7px]">
          <button aria-label="浮动"><Icon name="restore" size={12} /></button>
          <button aria-label="列表"><svg width="12" height="12" viewBox="0 0 12 12"><path d="M.500 1H11.500V11.500H.500ZM1 4H11M1 6.500H11M1 9H11" fill="none" stroke="#fff" /></svg></button>
          <button aria-label="展开"><svg width="12" height="8" viewBox="0 0 12 8"><path d="M0 8L6 0L12 8Z" fill="#fff" /></svg></button>
        </div>
      </div>
    </main>
  );
};

const SectionHead = ({ title }: { title: string }) => (
  <div className="flex h-6 shrink-0 border-b border-t-[3px] border-b-[#777] border-t-[#a0a0a0] bg-linear-to-b from-[#e6e6e6] to-[#cfcfcf]">
    <button aria-label={`折叠${title}`} className="flex w-[21px] items-center justify-center border-r border-[#888]"><Chevron dir="down" /></button>
    <h2 className="pl-1 text-[15px]/5 font-semibold">{title}</h2>
  </div>
);

const findOptions = [
  { t: '全字匹配' },
  { t: '区分大小写' },
  { t: '在子结构中查找', off: true },
  { t: '在隐藏文本中查找', off: true, on: true },
  { t: '使用通配符', off: true },
  { t: '使用正则表达式', off: true },
];

const flatBtn = 'h-5 flex-1 border border-[#8e8e8e] bg-linear-to-b from-[#f4f4f4] to-[#dedede] text-center text-[#8a8a8a]';

const Tasks = () => (
  <aside className="flex w-[198px] shrink-0 flex-col bg-[#e9e9e9] text-xs/[18px]">
    <div className="flex h-[27px] shrink-0 items-center justify-between border-b-[3px] border-[#f5a31c] bg-[#b0b0b0] pl-1.5 pr-2">
      <h2 className="text-[15px] text-white">任务</h2>
      <div className="flex items-center gap-1.5">
        <button aria-label="浮动"><Icon name="restore" size={12} /></button>
        <button aria-label="固定"><Icon name="pinGrid" size={14} /></button>
        <button aria-label="折叠"><svg width="7" height="12" viewBox="0 0 7 12"><path d="M0 0V12L7 6Z" fill="#fff" /></svg></button>
      </div>
    </div>
    <h2 className="h-[25px] shrink-0 border-b border-[#777] bg-linear-to-b from-white to-[#d8d8d8] pl-1.5 text-[15px]/6 font-medium">选项</h2>
    <div className="flex h-[27px] shrink-0 items-center justify-end"><ToolBtn icon="window" label="面板" /></div>
    <SectionHead title="查找和替换" />
    <div className="shrink-0 pl-[13px] pt-4">
      <label htmlFor="find" className="block h-5 pl-0.5">查找：</label>
      <Combo id="find" value="" className="w-[174px]" />
      <div className="mt-[5px]">
        {findOptions.map((o, i) => (
          <label key={o.t} htmlFor={`opt${i}`} className={clsx('flex h-6 items-center gap-1', o.off && 'text-[#909090]')}>
            <Check id={`opt${i}`} checked={o.on} disabled={o.off} />{o.t}
          </label>
        ))}
      </div>
      <div className="mt-[7px]">
        <Radio id="down" name="dir" label="向下" checked />
        <Radio id="up" name="dir" label="向上" />
      </div>
      <div className="mt-[3px] flex"><button disabled className={flatBtn}>查找</button></div>
      <label htmlFor="replace" className="mt-[17px] block h-5 pl-0.5">替换为：</label>
      <Combo id="replace" value="" className="w-[174px]" />
      <div className="mt-1">
        <Radio id="whole" name="scope" label="整个文档" checked disabled />
        <Radio id="from" name="scope" label="从当前位置开始" disabled />
        <Radio id="selection" name="scope" label="选择" disabled />
      </div>
      <div className="mt-[3px] flex gap-1.5 pb-3">
        <button disabled className={flatBtn}>替换</button>
        <button disabled className={flatBtn}>全部替换</button>
      </div>
    </div>
    <SectionHead title="语言和资源" />
    <div className="shrink-0 border-b border-[#a0a0a0] pb-[11px] pl-3 pt-3.5">
      <label htmlFor="editLang" className="block h-[22px] pl-0.5">编辑语言：</label>
      <div className="flex items-center gap-1.5">
        <Combo id="editLang" value="中文（中华人民共和国）" className="w-40" />
        <button aria-label="项目语言" className="flex size-5 items-center justify-center border border-[#a0a0a0] bg-[#efefef]"><Icon name="addNew" /></button>
      </div>
    </div>
    <div className="flex min-h-0 flex-1 flex-col pl-3 pt-3.5">
      <label htmlFor="refLang" className="block h-[22px] shrink-0 pl-0.5">参考语言：</label>
      <Combo id="refLang" value="中文（中华人民共和国）" className="shrink-0" />
      <div className="mb-3 mt-[7px] flex-1 border border-[#999]" />
    </div>
    <HScroll tail="w-2.5" />
  </aside>
);

const sideTab = 'flex w-5 flex-col items-center gap-2.5 border border-l-0 border-[#888] pt-1 text-sm/5 font-semibold';

const SideTabs = () => (
  <nav className="flex w-[25px] shrink-0 flex-col gap-[3px] border-l border-[#3c3c3c] bg-[#b0b0b0] pt-[30px]">
    <button className={clsx(sideTab, 'h-[75px] bg-[#ebebeb]')}><Icon name="taskTab" /><span className="[text-orientation:sideways] [writing-mode:vertical-rl]">任务</span></button>
    <button className={clsx(sideTab, 'h-[61px] bg-[#cfcfcf] text-[#555]')}><Icon name="book" /><span className="[text-orientation:sideways] [writing-mode:vertical-rl]">库</span></button>
    <button className={clsx(sideTab, 'h-[95px] bg-[#cfcfcf] text-[#555]')}><Icon name="addin" /><span className="[text-orientation:sideways] [writing-mode:vertical-rl]">Add-Ins</span></button>
  </nav>
);

const StatusBar = () => (
  <footer className="flex h-[29px] shrink-0 items-center bg-[#1c1c1c] text-white">
    <button className="ml-9 flex items-center gap-2.5 text-sm">
      <svg width="7" height="12" viewBox="0 0 7 12"><path d="M7 0V12L0 6Z" fill="#fff" /></svg>
      <span>Portal <span className="text-base">视图</span></span>
    </button>
    <button className="ml-[54px] flex h-5 w-[113px] items-center gap-1.5 bg-[#c8c8c8] pl-0.5 text-[13px] text-black"><Icon name="overview" />总览</button>
    <button className="ml-[3px] flex h-5 w-[113px] items-center gap-1.5 bg-white pl-1 text-xs text-black"><Icon name="db" />PN4_GW2FP...</button>
    <span className="flex-1" />
    <button aria-label="信息窗口" className="flex size-5 items-center justify-center bg-[#c8c8c8]">
      <svg width="18" height="18" viewBox="0 0 18 18"><path d="M3 1H9V11H3ZM4 4H8M4 7H8" fill="#fff" stroke="#888" strokeWidth=".800" /><path d="M15 11V5H11M13 3L11 5L13 7" fill="none" stroke="#111" strokeWidth="1.600" /><rect x="1" y="12.500" width="16" height="4" fill="#111" /><path d="M3 14.500H6M8 14.500H11M13 14.500H15" stroke="#fff" strokeWidth="1.600" /></svg>
    </button>
    <div className="ml-1.5 flex h-full items-center gap-1.5 border-l border-[#6a6a6a] pl-[3px] text-[13px]">
      <svg width="15" height="15" viewBox="0 0 15 15"><circle cx="7.500" cy="7.500" r="7" fill="#1212f0" /><path d="M4 7.500L6.800 10.500L11 4.500" fill="none" stroke="#fff" strokeWidth="1.800" /></svg>
      已通过地址 IP=192.168.1.27 连接到 ...
    </div>
    <div className="ml-[18px] mr-[39px] flex h-3 gap-px">
      <i className="w-[3px] bg-[#f3dcd2]" />
      {Array.from({ length: 6 }, (_, i) => <i key={i} className="w-[3px] bg-[#f05a1e]" />)}
    </div>
  </footer>
);

const app = 'flex h-10 items-center justify-center border-b-2';

const Taskbar = () => (
  <footer className="flex h-10 shrink-0 items-center bg-[#0b1014] text-white">
    <button aria-label="开始" className="flex h-10 w-12 items-center justify-center">
      <svg width="17" height="17" viewBox="0 0 17 17"><path d="M0 2.500L7.500 1.500V8H0ZM8.500 1.300L17 0V8H8.500ZM0 9H7.500V15.500L0 14.500ZM8.500 9H17V17L8.500 15.700Z" fill="#fff" /></svg>
    </button>
    <button aria-label="搜索" className="flex h-10 w-12 items-center justify-center">
      <svg width="17" height="17" viewBox="0 0 17 17"><circle cx="10" cy="6.500" r="5.500" fill="none" stroke="#fff" strokeWidth="1.400" /><path d="M6 10.500L.500 16.500" stroke="#fff" strokeWidth="1.500" /></svg>
    </button>
    <button aria-label="文件资源管理器" className={clsx(app, 'ml-[7px] w-10 border-[#76b9ed]')}>
      <svg width="22" height="19" viewBox="0 0 22 19"><path d="M0 1H8L10 3H22V18H0Z" fill="#f7c948" /><path d="M0 5H22V18H0Z" fill="#fde08a" /><path d="M4 18V12C4 10 5 9.500 6 9.500H16C17 9.500 18 10 18 12V18H14V14H8V18Z" fill="#2e9bd6" /></svg>
    </button>
    <button aria-label="TIA V19" className={clsx(app, 'ml-[5px] w-12 border-[#76b9ed] bg-[#3a4045]')}>
      <svg width="26" height="30" viewBox="0 0 26 30" className="font-['Liberation_Sans']"><rect y="2" width="26" height="26" fill="#23283a" /><text x="1" y="13" fontSize="13" fill="#fff">TIA</text><text x="0" y="27" fontSize="12" fill="#a3b4dc">V19</text></svg>
    </button>
    <button aria-label="浏览器" className={clsx(app, 'ml-[5px] w-10 border-[#76b9ed]')}>
      <svg width="22" height="22" viewBox="0 0 22 22"><circle cx="11" cy="11" r="10.500" fill="#57b93a" /><circle cx="11" cy="10.500" r="7.500" fill="#a6e384" /><circle cx="10.500" cy="10" r="4" fill="#d4f3c0" /><circle cx="10.500" cy="10" r="1.800" fill="#f0fbe6" /></svg>
    </button>
    <button aria-label="录屏" className={clsx(app, 'ml-[9px] w-10 border-[#76b9ed]')}>
      <svg width="24" height="24" viewBox="0 0 24 24"><rect width="24" height="24" rx="5" fill="#1b1e28" /><rect x="3.500" y="6" width="12" height="12" rx="3" fill="none" stroke="#e8e8e8" strokeWidth="1.500" /><path d="M15.500 11L20.500 7V17L15.500 13" fill="none" stroke="#e8e8e8" strokeWidth="1.500" /><circle cx="10" cy="9.500" r="1" fill="#e8c53a" /></svg>
    </button>
    <span className="flex-1" />
    <div className="flex items-center gap-[9px]">
      <svg width="12" height="8" viewBox="0 0 12 8"><path d="M.500 7L6 1.500L11.500 7" fill="none" stroke="#fff" strokeWidth="1.300" /></svg>
      <svg width="17" height="14" viewBox="0 0 17 14" className="ml-1"><rect x="5" y="4.500" width="10.500" height="7" fill="#fff" stroke="#fff" /><rect x="6" y="5.500" width="8.500" height="5" fill="#fff" stroke="#111" strokeWidth=".600" /><path d="M16.500 6.500V9.500M1 1V4H5V1M3 4V8H5" stroke="#fff" fill="none" /></svg>
      <svg width="15" height="15" viewBox="0 0 15 15"><path d="M1 14A13 13 0 0 1 14 1.500M4.500 14A9.500 9.500 0 0 1 14 5M7.500 14A6.500 6.500 0 0 1 14 8.300" fill="none" stroke="#ddd" strokeWidth="1.200" /><path d="M10 14A4 4 0 0 1 14 11V14Z" fill="#fff" /></svg>
      <svg width="17" height="14" viewBox="0 0 17 14"><path d="M1 5H3.500L7 1.500V12.500L3.500 9H1ZM9.500 5A3 3 0 0 1 9.500 9M11.500 3A6 6 0 0 1 11.500 11M13.700 1.500A8 8 0 0 1 13.700 12.500" fill="none" stroke="#fff" strokeWidth="1.100" /></svg>
      <span className="text-base">A</span>
      <span className="ml-2"><Sogou size={17} /></span>
    </div>
    <time className="ml-3 w-[62px] text-center text-xs/5">16:06<br />2023/12/2</time>
    <button aria-label="通知" className="relative ml-[18px] mr-1.5 h-8 w-[26px]">
      <svg width="26" height="30" viewBox="0 0 26 30"><path d="M1 4H16V18H8L5 21V18H1Z" fill="#fff" /><path d="M3.500 8H13.500M3.500 11H13.500M3.500 14H10" stroke="#0b1014" strokeWidth="1.300" /><circle cx="17" cy="20" r="7.500" fill="#4a4e52" stroke="#a5a8aa" /></svg>
      <span className="absolute bottom-[5px] right-1.5 text-[11px]/3 font-semibold">2</span>
    </button>
    <span className="mr-1 h-10 border-l border-[#555]" />
  </footer>
);

const ImeBar = () => (
  <div className="absolute bottom-[192px] right-[68px] flex items-end">
    <Sogou size={32} />
    <div className="flex h-[26px] w-[194px] items-center justify-between border border-l-0 border-[#b8d4ea] bg-white pl-1.5 pr-1 text-[#0f6fd0]">
      <span className="text-lg/6">A</span>
      <svg width="14" height="14" viewBox="0 0 14 14"><circle cx="3" cy="4" r="2" fill="#0f6fd0" /><path d="M10 7H13V9.500L11 12.500H10L11 10H10Z" fill="#0f6fd0" /></svg>
      <svg width="14" height="18" viewBox="0 0 14 18"><rect x="4" y="1" width="6" height="10" rx="3" fill="#0f6fd0" /><path d="M1.500 8C1.500 14.500 12.500 14.500 12.500 8M7 13V16M4 16.500H10" fill="none" stroke="#0f6fd0" strokeWidth="1.500" /></svg>
      <svg width="16" height="14" viewBox="0 0 16 14"><rect x="1" y="1.500" width="14" height="11" rx="1.500" fill="none" stroke="#0f6fd0" strokeWidth="1.600" /><path d="M3.500 4.500H13M3.500 7H13M5 10H11" stroke="#0f6fd0" strokeWidth="1.500" strokeDasharray="1.600 1" /></svg>
      <svg width="16" height="16" viewBox="0 0 16 16"><path d="M1 2L5 1C6 3 10 3 11 1L15 2L15.500 7L12.500 8V15H3.500V8L.500 7Z" fill="#6f74ea" /></svg>
      <svg width="16" height="14" viewBox="0 0 16 14"><ellipse cx="8" cy="8" rx="7.500" ry="5.500" fill="#0f6fd0" /><path d="M6 1.500H10M8 1V4" stroke="#0f6fd0" strokeWidth="1.300" /><path d="M3.500 8H7M5.200 6.300V9.700" stroke="#fff" strokeWidth="1.200" /><circle cx="11" cy="8" r="1.500" fill="none" stroke="#fff" /></svg>
      <svg width="14" height="14" viewBox="0 0 14 14" fill="#0f6fd0"><rect x="0" y="0" width="6.300" height="6.300" rx="1.500" /><rect x="0" y="7.700" width="6.300" height="6.300" rx="1.500" /><rect x="7.700" y="7.700" width="6.300" height="6.300" rx="1.500" /><circle cx="10.800" cy="3.200" r="2.300" fill="none" stroke="#0f6fd0" strokeWidth="1.600" /></svg>
      <svg width="16" height="16" viewBox="0 0 16 16"><path d="M8 0L10 3L14 3.500L13 7L15 10L11.500 11.500L10 15H6L4.500 11.500L1 10L3 7L2 3.500L6 3Z" fill="#0f6fd0" /><path d="M8 15V7M6 7C6 4.500 10 4.500 10 7" stroke="#fff" fill="none" strokeWidth="1.300" /></svg>
    </div>
  </div>
);

export default function App() {
  return (
    <div className="relative flex h-screen flex-col overflow-hidden bg-[#b0b0b0] font-['Noto_Sans','Noto_Sans_CJK_SC',sans-serif] text-xs text-black">
      <TitleBar />
      <MainToolbar />
      <div className="flex min-h-0 flex-1">
        <nav className="flex w-6 shrink-0 flex-col border-r border-[#3c3c3c] bg-linear-to-r from-[#a6a6a6] to-[#b4b4b4]">
          <span className="h-[25px] border-b border-white" />
          <button className="flex h-[221px] items-center justify-center border-b border-white text-sm/5 font-semibold text-white">
            <span className="rotate-180 [text-orientation:sideways] [writing-mode:vertical-rl]">PLC 编程</span>
          </button>
        </nav>
        <div className="flex w-[572px] shrink-0 flex-col border-r-[3px] border-[#1c1f2a]">
          <ProjectTree />
          <DetailView />
        </div>
        <Editor />
        <span className="w-[3px] shrink-0 bg-[#1c1f2a]" />
        <Tasks />
        <SideTabs />
      </div>
      <StatusBar />
      <Taskbar />
      <ImeBar />
      <svg width="13" height="20" viewBox="0 0 13 20" className="absolute left-[82.400%] top-[435px]">
        <path d="M1 1V16L4.500 12.800L7 18.500L9.200 17.500L6.800 12H11.500Z" fill="#fff" stroke="#000" />
      </svg>
    </div>
  );
}
